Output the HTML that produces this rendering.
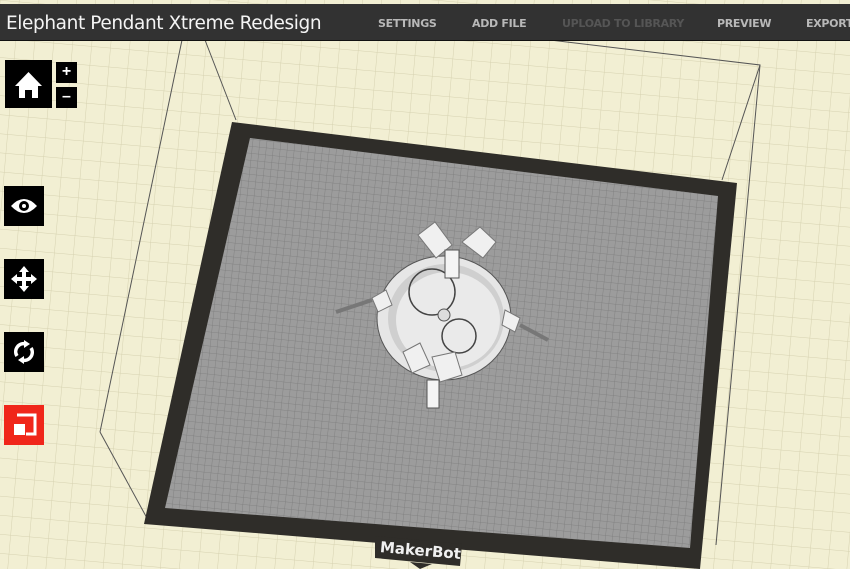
<!DOCTYPE html>
<html><head><meta charset="utf-8"><style>
body{margin:0;width:850px;height:569px;overflow:hidden;background:#f2efd3;font-family:"Liberation Sans",sans-serif;position:relative}
#bar{position:absolute;left:0;top:4px;width:850px;height:36px;background:#323232;border-bottom:1px solid #111}
#title{position:absolute;left:6px;top:9px;color:#f4f4f4;font-size:18.5px;font-family:"DejaVu Sans",sans-serif;letter-spacing:-0.4px}
.nav{position:absolute;top:13px;color:#b8b8b8;font-size:11px;font-weight:bold;font-family:"DejaVu Sans",sans-serif;letter-spacing:-0.3px}
.btn{position:absolute;background:#000}
</style></head><body>
<svg width="850" height="569" style="position:absolute;left:0;top:0">
<defs>
<pattern id="g" width="19" height="19" patternUnits="userSpaceOnUse" patternTransform="rotate(5)">
<path d="M0 0H19M0 0V19" stroke="#d6d2b0" stroke-width="1" fill="none"/></pattern>
<pattern id="p" width="7" height="7" patternUnits="userSpaceOnUse" patternTransform="rotate(6)">
<path d="M0 0H7M0 0V7" stroke="#7c7c7c" stroke-width="0.8" fill="none"/></pattern>
</defs>
<rect width="850" height="569" fill="url(#g)"/>
<g stroke="#555" stroke-width="1" fill="none">
<path d="M182 40 L100 432"/><path d="M205 40 L236 120"/>
<path d="M550 40 L760 65 L716 545"/><path d="M760 65 L722 180"/><path d="M100 432 L148 520"/>
</g>
<polygon points="232,122 737,183 700,569 144,524" fill="#2f2d29"/>
<polygon points="375,536 462,544 460,566 375,558" fill="#2f2d29"/>
<polygon points="410,562 432,564 420,569" fill="#2f2d29"/>
<polygon points="250,138 718,196 690,548 165,508" fill="#9c9c9c"/>
<polygon points="250,138 718,196 690,548 165,508" fill="url(#p)"/>
<text x="380" y="552" fill="#f0f0f0" font-size="15" font-family="DejaVu Sans" font-weight="bold" transform="rotate(5 380 548)">MakerBot</text>
<g>
<ellipse cx="444" cy="318" rx="67" ry="62" fill="#e6e6e6" stroke="#555"/>
<ellipse cx="446" cy="318" rx="58" ry="54" fill="#cfcfcf"/>
<ellipse cx="448" cy="320" rx="52" ry="48" fill="#eaeaea"/>
<circle cx="432" cy="292" r="23" fill="none" stroke="#444" stroke-width="1.5"/>
<circle cx="459" cy="336" r="17" fill="none" stroke="#444" stroke-width="1.5"/>
<circle cx="444" cy="315" r="6" fill="#ddd" stroke="#555"/>
<path d="M418 235 L435 222 L452 245 L436 258 Z" fill="#f0f0f0" stroke="#777"/>
<path d="M462 242 L480 227 L496 242 L483 258 Z" fill="#f0f0f0" stroke="#777"/>
<rect x="445" y="250" width="14" height="28" fill="#f4f4f4" stroke="#555"/>
<path d="M372 298 L386 290 L392 305 L378 312 Z" fill="#f0f0f0" stroke="#777"/>
<path d="M336 312 L372 300" stroke="#777" stroke-width="4"/>
<path d="M505 310 L520 318 L515 332 L502 325 Z" fill="#f0f0f0" stroke="#777"/>
<path d="M520 325 L548 340" stroke="#777" stroke-width="4"/>
<path d="M403 352 L420 343 L430 365 L412 373 Z" fill="#f0f0f0" stroke="#777"/>
<path d="M432 357 L455 352 L462 375 L440 382 Z" fill="#f0f0f0" stroke="#777"/>
<rect x="427" y="380" width="12" height="28" fill="#f4f4f4" stroke="#555"/>
</g>
</svg>
<div id="bar"><div id="title">Elephant Pendant Xtreme Redesign</div>
<div class="nav" style="left:378px">SETTINGS</div>
<div class="nav" style="left:472px">ADD FILE</div>
<div class="nav" style="left:562px;color:#555">UPLOAD TO LIBRARY</div>
<div class="nav" style="left:717px">PREVIEW</div>
<div class="nav" style="left:806px">EXPORT</div></div>
<div class="btn" style="left:5px;top:60px;width:47px;height:48px">
<svg width="47" height="48"><path d="M10 26 L23.5 12 L37 26 L33 26 L33 38 L14 38 L14 26 Z" fill="#fff"/><rect x="20" y="30" width="7" height="8" fill="#000"/></svg></div>
<div class="btn" style="left:56px;top:62px;width:21px;height:21px;color:#fff;font-weight:bold;font-size:16px;text-align:center;line-height:20px">+</div>
<div class="btn" style="left:56px;top:87px;width:21px;height:21px;color:#fff;font-weight:bold;font-size:16px;text-align:center;line-height:20px">–</div>
<div class="btn" style="left:4px;top:186px;width:40px;height:40px">
<svg width="40" height="40"><path d="M7 20 Q20 6 33 20 Q20 34 7 20Z" fill="#fff"/><circle cx="20" cy="20" r="5" fill="#000"/><circle cx="20" cy="20" r="2" fill="#fff"/></svg></div>
<div class="btn" style="left:4px;top:259px;width:40px;height:40px">
<svg width="40" height="40"><path d="M20 7 L25 13 L22 13 L22 18 L27 18 L27 15 L33 20 L27 25 L27 22 L22 22 L22 27 L25 27 L20 33 L15 27 L18 27 L18 22 L13 22 L13 25 L7 20 L13 15 L13 18 L18 18 L18 13 L15 13 Z" fill="#fff"/></svg></div>
<div class="btn" style="left:4px;top:332px;width:40px;height:40px">
<svg width="40" height="40" fill="none" stroke="#fff" stroke-width="3.5"><path d="M13 24 A8 8 0 0 1 22 12"/><path d="M27 16 A8 8 0 0 1 18 28"/><path d="M20 8 L26 12 L20 16Z" fill="#fff" stroke="none"/><path d="M20 24 L14 28 L20 32Z" fill="#fff" stroke="none"/></svg></div>
<div style="position:absolute;left:4px;top:405px;width:40px;height:40px;background:#f0261a">
<svg width="40" height="40"><path d="M13 10 H31 V29 H22" fill="none" stroke="#fff" stroke-width="3"/><rect x="10" y="19" width="11" height="11" fill="#fff"/></svg></div>
</body></html>
